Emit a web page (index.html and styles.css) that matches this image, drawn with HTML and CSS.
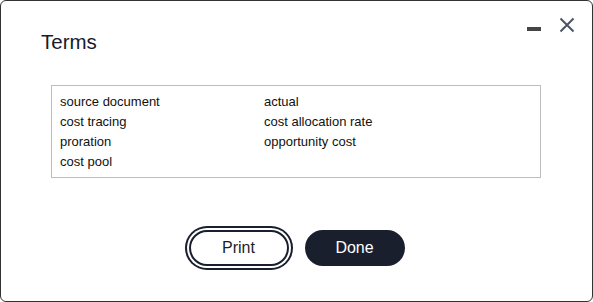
FILE: index.html
```html
<!DOCTYPE html>
<html>
<head>
<meta charset="utf-8">
<link rel="stylesheet" href="styles.css">
</head>
<body>
<div class="dialog">
  <div class="header">
    <h1 class="title">Terms</h1>
    <div class="controls">
      <span class="minimize"></span>
      <svg class="close" width="16" height="16" viewBox="0 0 16 16"><path d="M1.5 1.5 L14.5 14.5 M14.5 1.5 L1.5 14.5" stroke="#4b5563" stroke-width="2" fill="none"/></svg>
    </div>
  </div>
  <div class="terms">
    <div class="term">source document</div>
    <div class="term">cost tracing</div>
    <div class="term">proration</div>
    <div class="term">cost pool</div>
    <div class="term">actual</div>
    <div class="term">cost allocation rate</div>
    <div class="term">opportunity cost</div>
  </div>
  <div class="actions">
    <button class="btn btn-outline">Print</button>
    <button class="btn btn-solid">Done</button>
  </div>
</div>
</body>
</html>
```
FILE: styles.css
```css
html, body {
  margin: 0;
  padding: 0;
  background: #ffffff;
}
body {
  font-family: "Liberation Sans", Arial, sans-serif;
  width: 593px;
  height: 302px;
}
.dialog {
  box-sizing: border-box;
  width: 593px;
  height: 302px;
  border: 1px solid #333333;
  border-radius: 6px;
  display: flex;
  flex-direction: column;
  background: #fff;
}
.header {
  display: flex;
  justify-content: space-between;
  align-items: flex-start;
  padding: 16px 17px 0 40px;
}
.title {
  margin: 13px 0 0 0;
  font-size: 20.5px;
  line-height: 24px;
  font-weight: normal;
  color: #161b2e;
}
.controls {
  display: flex;
  align-items: flex-start;
  gap: 18px;
}
.minimize {
  display: block;
  width: 14px;
  height: 4px;
  margin-top: 10px;
  background: #454545;
}
.close {
  display: block;
}
.terms {
  margin: 31px 51px 0 50px;
  border: 1px solid #bdbdbd;
  padding: 6px 8px 5px 8px;
  display: grid;
  grid-template-rows: repeat(4, 20px);
  grid-template-columns: 204px 1fr;
  grid-auto-flow: column;
  font-size: 13px;
  line-height: 20px;
  color: #111;
}
.actions {
  display: flex;
  justify-content: center;
  gap: 16px;
  margin-top: 52px;
}
.btn {
  box-sizing: border-box;
  width: 100px;
  height: 36px;
  border-radius: 18px;
  font-family: "Liberation Sans", Arial, sans-serif;
  font-size: 16px;
  cursor: pointer;
}
.btn-outline {
  background: #fff;
  color: #1a1f2e;
  border: 2px solid #1a1f2e;
  box-shadow: 0 0 0 2px #fff, 0 0 0 4px #1a1f2e;
}
.btn-solid {
  background: #1a1f2e;
  color: #fff;
  border: 2px solid #1a1f2e;
}
```
